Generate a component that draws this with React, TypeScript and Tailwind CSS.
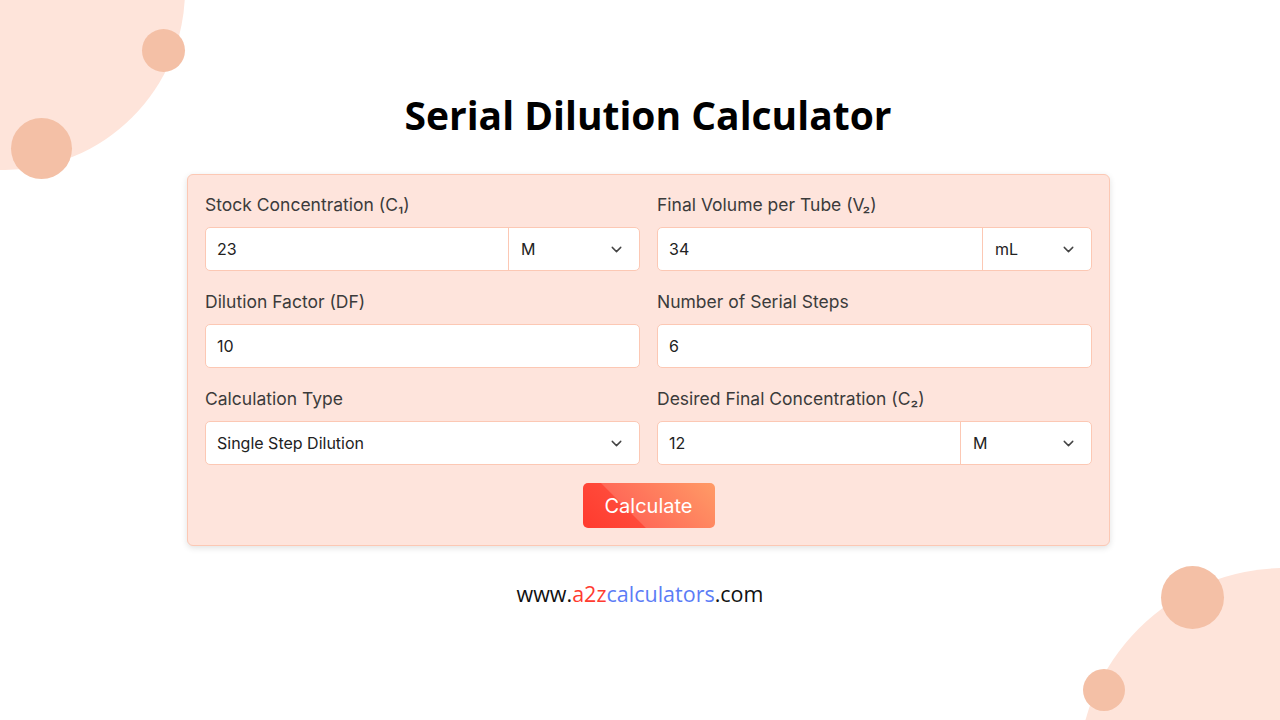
import React from 'react'
import { ChevronDown } from 'lucide-react'

const label = 'block text-[17.5px] leading-[20px] text-[#3b3b3b] mb-[12px]'
const box = 'h-[44px] bg-white border border-[#fcc8b4] rounded-[5px] flex items-center text-[16px] text-[#222]'

function UnitSelect({ value, width }: { value: string; width: string }) {
  return (
    <div className={`${width} h-full border-l border-[#fcc8b4] flex items-center justify-between pl-3 pr-[14px]`}>
      <span>{value}</span>
      <ChevronDown className="w-[17px] h-[17px] text-[#444]" strokeWidth={2} />
    </div>
  )
}

function Field({ title, children }: { title: React.ReactNode; children: React.ReactNode }) {
  return (
    <div>
      <label className={label}>{title}</label>
      {children}
    </div>
  )
}

export default function App() {
  return (
    <div className="relative w-[1280px] h-[720px] overflow-hidden bg-white" style={{ fontFamily: 'Inter, "Noto Sans", sans-serif' }}>
      {/* decorative blobs */}
      <div className="absolute -left-[175px] -top-[190px] w-[360px] h-[360px] rounded-full bg-[#fee4da]" />
      <div className="absolute left-[142px] top-[29px] w-[43px] h-[43px] rounded-full bg-[#f4c0a6]" />
      <div className="absolute left-[11px] top-[118px] w-[61px] h-[61px] rounded-full bg-[#f4c0a6]" />
      <div className="absolute left-[1078px] top-[568px] w-[414px] h-[414px] rounded-full bg-[#fee4da]" />
      <div className="absolute left-[1161px] top-[566px] w-[63px] h-[63px] rounded-full bg-[#f4c0a6]" />
      <div className="absolute left-[1083px] top-[669px] w-[42px] h-[42px] rounded-full bg-[#f4c0a6]" />

      <div className="relative flex flex-col items-center pt-[88px]">
        <h1 className="text-[39px] leading-[54px] font-bold text-black ml-[16px]" style={{ fontFamily: '"Open Sans", sans-serif' }}>
          Serial Dilution Calculator
        </h1>

        <div className="mt-[32px] w-[923px] bg-[#fee4dc] border border-[#fcc8b4] rounded-[6px] shadow-[0_2px_6px_rgba(0,0,0,0.12)] px-[17px] pt-[20px] pb-[17px] ml-[17px]">
          <div className="grid grid-cols-2 gap-x-[17px] gap-y-[21px]">
            <Field title="Stock Concentration (C₁)">
              <div className={box}>
                <span className="flex-1 pl-[11px]">23</span>
                <UnitSelect value="M" width="w-[131px]" />
              </div>
            </Field>
            <Field title="Final Volume per Tube (V₂)">
              <div className={box}>
                <span className="flex-1 pl-[11px]">34</span>
                <UnitSelect value="mL" width="w-[109px]" />
              </div>
            </Field>
            <Field title="Dilution Factor (DF)">
              <div className={box}>
                <span className="flex-1 pl-[11px]">10</span>
              </div>
            </Field>
            <Field title="Number of Serial Steps">
              <div className={box}>
                <span className="flex-1 pl-[11px]">6</span>
              </div>
            </Field>
            <Field title="Calculation Type">
              <div className={`${box} justify-between pl-[11px] pr-[14px]`}>
                <span>Single Step Dilution</span>
                <ChevronDown className="w-[17px] h-[17px] text-[#444]" strokeWidth={2} />
              </div>
            </Field>
            <Field title="Desired Final Concentration (C₂)">
              <div className={box}>
                <span className="flex-1 pl-[11px]">12</span>
                <UnitSelect value="M" width="w-[131px]" />
              </div>
            </Field>
          </div>

          <div className="flex justify-center mt-[18px]">
            <button
              className="w-[132px] h-[45px] rounded-[5px] text-white text-[20px]"
              style={{ background: 'linear-gradient(45deg, #ff3a2e 0%, #ff4a3a 35%, #ff6a58 36%, #ff9b66 100%)' }}
            >
              Calculate
            </button>
          </div>
        </div>

        <p className="mt-[34px] text-[21.5px] leading-[28px] text-[#111] ml-[0px]" style={{ fontFamily: '"Open Sans", sans-serif' }}>
          www.<span className="text-[#ff3b30]">a2z</span><span className="text-[#5b7cf6]">calculators</span>.com
        </p>
      </div>
    </div>
  )
}
